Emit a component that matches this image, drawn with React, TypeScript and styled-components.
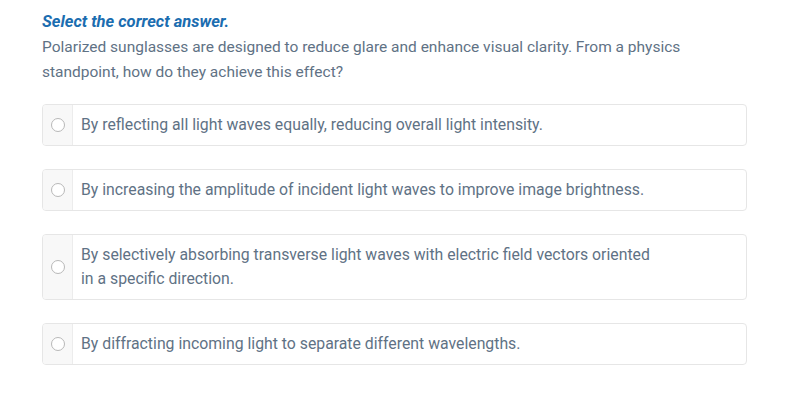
import React from "react";
import styled, { createGlobalStyle } from "styled-components";

const Global = createGlobalStyle`
  html, body { margin: 0; padding: 0; background: #fff; }
  body { font-family: Roboto, "Liberation Sans", sans-serif; }
`;

const Page = styled.div`
  padding: 12px 0 0 42px;
  width: 705px;
`;

const Title = styled.div`
  color: #1b6db0;
  font-weight: 700;
  font-style: italic;
  font-size: 16.5px;
  line-height: 20px;
`;

const Prompt = styled.p`
  margin: 3px 0 0;
  color: #5f7285;
  font-size: 15.5px;
  line-height: 25px;
`;

const List = styled.div`
  margin-top: 19px;
  display: flex;
  flex-direction: column;
  gap: 23px;
`;

const Option = styled.label`
  display: flex;
  border: 1px solid #e6e6e6;
  border-radius: 4px;
  overflow: hidden;
  background: #fff;
`;

const RadioCell = styled.div`
  width: 29px;
  flex: none;
  background: #f8f8f8;
  border-right: 1px solid #ececec;
  display: flex;
  align-items: center;
  justify-content: center;
`;

const Radio = styled.span`
  width: 12px;
  height: 12px;
  border-radius: 50%;
  border: 1px solid #b8b8b8;
  background: #fff;
`;

const Text = styled.div`
  padding: 8px 10px 8px 8px;
  color: #5f7285;
  font-size: 15.8px;
  line-height: 24px;
  min-height: 24px;
`;

const options = [
  "By reflecting all light waves equally, reducing overall light intensity.",
  "By increasing the amplitude of incident light waves to improve image brightness.",
  "By selectively absorbing transverse light waves with electric field vectors oriented\nin a specific direction.",
  "By diffracting incoming light to separate different wavelengths.",
];

export default function App() {
  return (
    <Page>
      <Global />
      <Title>Select the correct answer.</Title>
      <Prompt>
        Polarized sunglasses are designed to reduce glare and enhance visual clarity. From a physics
        <br />
        standpoint, how do they achieve this effect?
      </Prompt>
      <List>
        {options.map((o) => (
          <Option key={o}>
            <RadioCell>
              <Radio />
            </RadioCell>
            <Text>
              {o.split("\n").map((l, i) => (
                <React.Fragment key={i}>
                  {i > 0 && <br />}
                  {l}
                </React.Fragment>
              ))}
            </Text>
          </Option>
        ))}
      </List>
    </Page>
  );
}
